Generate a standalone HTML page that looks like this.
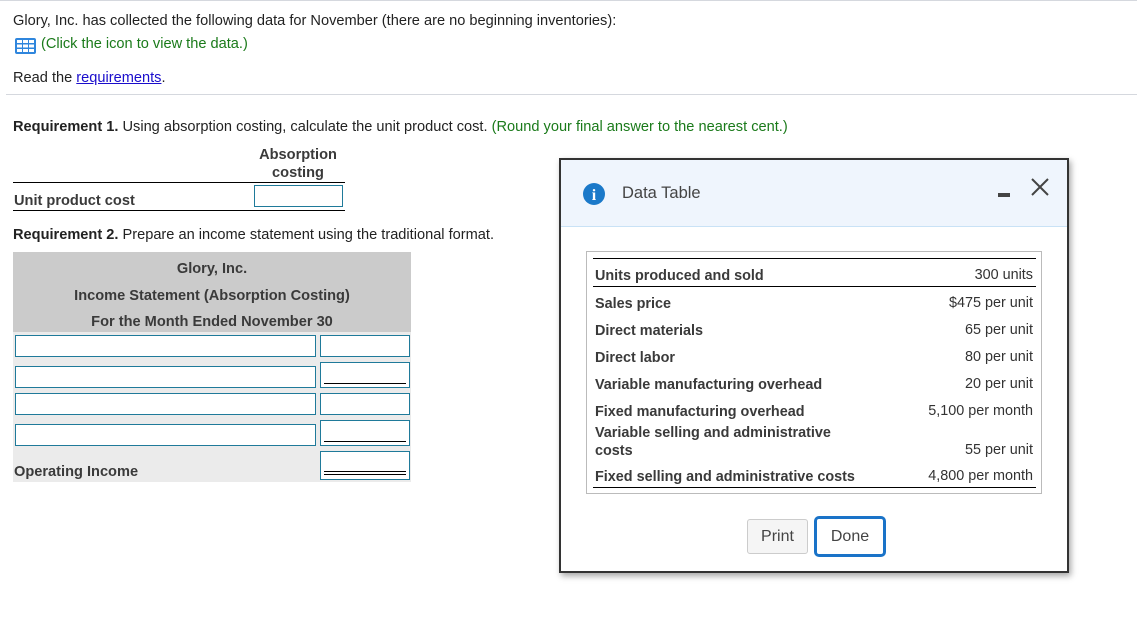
<!DOCTYPE html>
<html><head><style>
body{margin:0;width:1137px;height:618px;background:#fff;font-family:"Liberation Sans",Arial,sans-serif;font-size:14.6px;color:#222;position:relative;overflow:hidden}
.a{position:absolute;white-space:nowrap}
.b{font-weight:bold;color:#3a3a3a}
.in{position:absolute;border:1px solid #1f7a9a;background:#fff;box-sizing:border-box}
.ul{position:absolute;height:1px;background:#000}
.lbl{position:absolute;left:8px;font-weight:bold;color:#3a3a3a;font-size:14.4px}
.val{position:absolute;right:8px;color:#333;font-size:14.4px}
</style></head><body>
<div class="a" style="left:0;top:0;width:1137px;height:1px;background:#d5d8de"></div>
<div class="a" style="left:13px;top:13px">Glory, Inc. has collected the following data for November (there are no beginning inventories):</div>
<svg class="a" style="left:15px;top:38px" width="21" height="16" viewBox="0 0 21 16"><rect x="0" y="0" width="21" height="16" rx="2" fill="#2f86dd"/><g fill="#fff"><rect x="2" y="2" width="5" height="3"/><rect x="8" y="2" width="5" height="3"/><rect x="14" y="2" width="5" height="3"/><rect x="2" y="6.5" width="5" height="3"/><rect x="8" y="6.5" width="5" height="3"/><rect x="14" y="6.5" width="5" height="3"/><rect x="2" y="11" width="5" height="3"/><rect x="8" y="11" width="5" height="3"/><rect x="14" y="11" width="5" height="3"/></g></svg>
<div class="a" style="left:41px;top:36px;color:#1a7a1a">(Click the icon to view the data.)</div>
<div class="a" style="left:13px;top:70px">Read the <span style="color:#1a0dcc;text-decoration:underline">requirements</span>.</div>
<div class="a" style="left:6px;top:94px;width:1131px;height:1px;background:#d5d8de"></div>
<div class="a" style="left:13px;top:119px"><b>Requirement 1.</b> Using absorption costing, calculate the unit product cost. <span style="color:#1a7a1a">(Round your final answer to the nearest cent.)</span></div>
<div class="a b" style="left:246px;top:146px;width:104px;text-align:center;line-height:18px;white-space:normal">Absorption costing</div>
<div class="ul" style="left:13px;top:182px;width:332px"></div>
<div class="a b" style="left:14px;top:193px">Unit product cost</div>
<div class="in" style="left:254px;top:185px;width:89px;height:22px"></div>
<div class="ul" style="left:13px;top:210px;width:332px"></div>
<div class="a" style="left:13px;top:227px"><b>Requirement 2.</b> Prepare an income statement using the traditional format.</div>
<div class="a" style="left:13px;top:252px;width:398px;height:80px;background:#cbcbcb"></div>
<div class="a" style="left:13px;top:332px;width:398px;height:150px;background:#ebebeb"></div>
<div class="a b" style="left:13px;top:261px;width:398px;text-align:center">Glory, Inc.</div>
<div class="a b" style="left:13px;top:288px;width:398px;text-align:center">Income Statement (Absorption Costing)</div>
<div class="a b" style="left:13px;top:314px;width:398px;text-align:center">For the Month Ended November 30</div>
<div class="in" style="left:15px;top:335px;width:301px;height:22px"></div><div class="in" style="left:320px;top:335px;width:90px;height:22px"></div>
<div class="in" style="left:15px;top:366px;width:301px;height:22px"></div><div class="in" style="left:320px;top:362px;width:90px;height:26px"></div><div class="ul" style="left:324px;top:383px;width:82px"></div>
<div class="in" style="left:15px;top:393px;width:301px;height:22px"></div><div class="in" style="left:320px;top:393px;width:90px;height:22px"></div>
<div class="in" style="left:15px;top:424px;width:301px;height:22px"></div><div class="in" style="left:320px;top:420px;width:90px;height:26px"></div><div class="ul" style="left:324px;top:441px;width:82px"></div>
<div class="in" style="left:320px;top:451px;width:90px;height:29px"></div><div class="ul" style="left:324px;top:471px;width:82px"></div><div class="ul" style="left:324px;top:474px;width:82px"></div>
<div class="a b" style="left:14px;top:464px">Operating Income</div>

<div class="a" style="left:559px;top:158px;width:506px;height:411px;border:2px solid #333;background:#fff;box-shadow:2px 3px 6px rgba(0,0,0,.35)">
 <div class="a" style="left:0;top:0;width:506px;height:66px;background:#eff5fd;border-bottom:1px solid #c9e2f6"></div>
 <svg class="a" style="left:21px;top:22px" width="24" height="24"><circle cx="12" cy="12" r="11" fill="#1b79c9"/><text x="12" y="18" text-anchor="middle" font-family="Liberation Serif" font-weight="bold" font-size="16" fill="#fff">i</text></svg>
 <div class="a" style="left:61px;top:24px;font-size:16.5px;color:#444">Data Table</div>
 <div class="a" style="left:437px;top:33px;width:12px;height:4px;background:#444"></div>
 <svg class="a" style="left:469px;top:17px" width="20" height="20"><path d="M2 2L18 18M18 2L2 18" stroke="#444" stroke-width="2"/></svg>
 <div class="a" style="left:25px;top:91px;width:454px;height:241px;border:1px solid #bbb">
  <div class="ul" style="left:6px;top:6px;width:443px"></div>
  <div class="ul" style="left:6px;top:34px;width:443px"></div>
  <div class="ul" style="left:6px;top:235px;width:443px"></div>
  <div class="lbl" style="top:16px">Units produced and sold</div><div class="val" style="top:15px">300 units</div>
  <div class="lbl" style="top:44px">Sales price</div><div class="val" style="top:43px">$475 per unit</div>
  <div class="lbl" style="top:71px">Direct materials</div><div class="val" style="top:70px">65 per unit</div>
  <div class="lbl" style="top:98px">Direct labor</div><div class="val" style="top:97px">80 per unit</div>
  <div class="lbl" style="top:125px">Variable manufacturing overhead</div><div class="val" style="top:124px">20 per unit</div>
  <div class="lbl" style="top:152px">Fixed manufacturing overhead</div><div class="val" style="top:151px">5,100 per month</div>
  <div class="lbl" style="top:172px;line-height:18px">Variable selling and administrative<br>costs</div><div class="val" style="top:190px">55 per unit</div>
  <div class="lbl" style="top:217px">Fixed selling and administrative costs</div><div class="val" style="top:216px">4,800 per month</div>
 </div>
 <div class="a" style="left:186px;top:359px;width:59px;height:33px;border:1px solid #ccc;border-radius:3px;background:#f5f5f5;text-align:center;line-height:33px;font-size:16px;color:#444">Print</div>
 <div class="a" style="left:253px;top:356px;width:66px;height:35px;border:3px solid #1a73c8;border-radius:5px;text-align:center;line-height:35px;font-size:16px;color:#444">Done</div>
</div>
</body></html>
